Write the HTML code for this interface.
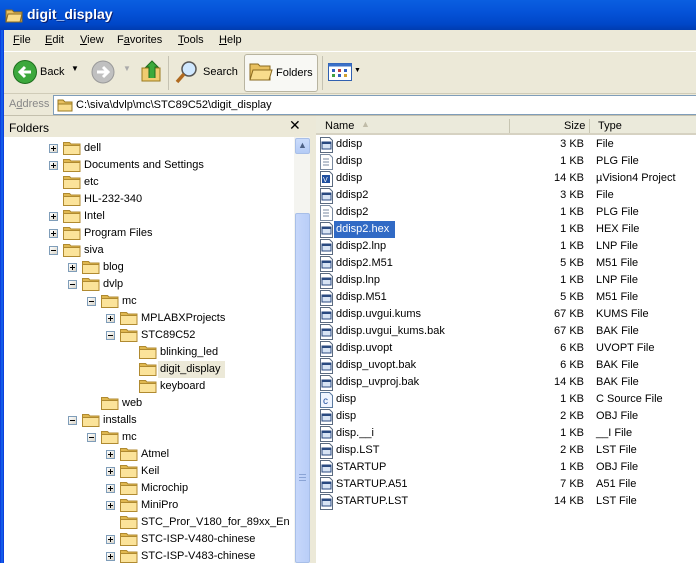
<!DOCTYPE html>
<html><head><style>
*{margin:0;padding:0;box-sizing:border-box}
body{width:696px;height:563px;overflow:hidden;font-family:Tahoma,"Liberation Sans",sans-serif;font-size:11px;background:#ece9d8;position:relative;color:#000}
.a{position:absolute;white-space:nowrap}
#title{left:0;top:0;width:696px;height:30px;background:linear-gradient(#0a5fe0,#0553d8 40%,#0047c8 80%,#003cb0);}
#title span{position:absolute;left:27px;top:6px;color:#fff;font-weight:bold;font-size:14px;text-shadow:1px 1px #0a1e6e}
#menu{left:4px;top:30px;width:692px;height:22px;background:#ece9d8;border-bottom:1px solid #fff}
#menu span{position:absolute;top:4px;font-size:11px}
#tb{left:4px;top:53px;width:692px;height:41px;background:#ece9d8;border-bottom:1px solid #d0ccb8}
#addr{left:4px;top:94px;width:692px;height:22px;background:#ece9d8;border-bottom:1px solid #c4c0ad}
.tree{left:4px;top:137px;width:290px;height:426px;background:#fff}
.ex{position:absolute;width:9px;height:9px;border:1px solid #7f9db9;background:linear-gradient(135deg,#fff,#d8d4c8);}
.ex:before{content:"";position:absolute;left:1px;top:3px;width:5px;height:1px;background:#000}
.ex.p:after{content:"";position:absolute;left:3px;top:1px;width:1px;height:5px;background:#000}
</style></head><body>
<div class="a" id="title"><svg class="a" style="left:5px;top:7px" width="18" height="16"><path d="M1 3h6l2 2h8v10H1z" fill="#e8c060" stroke="#8a6a20"/><path d="M3 7h14l-2 8H1z" fill="#f8dc8c" stroke="#8a6a20"/></svg><span>digit_display</span></div>
<div class="a" style="left:0;top:30px;width:4px;height:533px;background:linear-gradient(90deg,#0831d9,#166aee,#0831d9)"></div>
<div class="a" id="menu">
<span style="left:9px"><u>F</u>ile</span><span style="left:41px"><u>E</u>dit</span><span style="left:76px"><u>V</u>iew</span><span style="left:113px">F<u>a</u>vorites</span><span style="left:174px"><u>T</u>ools</span><span style="left:215px"><u>H</u>elp</span>
</div>
<div class="a" id="tb">
<svg class="a" style="left:8px;top:6px" width="26" height="26"><circle cx="13" cy="13" r="11.5" fill="#3ca83c" stroke="#1e6e1e"/><path d="M19 13H9M13 8l-5 5 5 5" stroke="#fff" stroke-width="3" fill="none"/></svg>
<span class="a" style="left:36px;top:13px">Back</span><span class="a" style="left:67px;top:11px;font-size:8px">▼</span>
<svg class="a" style="left:86px;top:7px" width="26" height="26"><circle cx="13" cy="12" r="11" fill="#c0c0c0" stroke="#999"/><path d="M7 12h10M13 7l5 5-5 5" stroke="#fff" stroke-width="3" fill="none"/></svg>
<span class="a" style="left:119px;top:11px;font-size:8px;color:#aaa">▼</span>
<svg class="a" style="left:136px;top:5px" width="24" height="26"><path d="M2 10h18v13H2z" fill="#f0cc70" stroke="#9a7a20"/><path d="M9 20V9h-3l6-6 6 6h-3v11" fill="#3caa3c" stroke="#1e6e1e"/></svg>
<div class="a" style="left:164px;top:3px;width:1px;height:34px;background:#c5c2b2"></div>
<svg class="a" style="left:170px;top:6px" width="26" height="26"><circle cx="15" cy="10" r="7" fill="#d0e8ff" stroke="#555" stroke-width="1.5"/><path d="M10 15l-7 8" stroke="#b06a20" stroke-width="3.5"/></svg>
<span class="a" style="left:199px;top:13px">Search</span>
<div class="a" style="left:240px;top:1px;width:74px;height:38px;border:1px solid #b8b4a0;border-radius:3px;background:#f8f8f4"></div>
<svg class="a" style="left:245px;top:8px" width="24" height="22"><path d="M1 3h8l2 2h10v14H1z" fill="#e8c060" stroke="#8a6a20"/><path d="M4 9h19l-3 10H1z" fill="#f8dc8c" stroke="#8a6a20"/></svg>
<span class="a" style="left:272px;top:14px">Folders</span>
<div class="a" style="left:318px;top:3px;width:1px;height:34px;background:#c5c2b2"></div>
<svg class="a" style="left:324px;top:10px" width="24" height="18"><rect x="0.5" y="0.5" width="23" height="17" fill="#fff" stroke="#3060b0"/><rect x="0.5" y="0.5" width="23" height="3" fill="#3a70c8"/><g fill="#3060c0"><rect x="4" y="6" width="3" height="3"/><rect x="10" y="6" width="3" height="3" fill="#c04040"/><rect x="16" y="6" width="3" height="3"/><rect x="4" y="11" width="3" height="3" fill="#40a040"/><rect x="10" y="11" width="3" height="3"/><rect x="16" y="11" width="3" height="3" fill="#d0a030"/></g></svg>
<span class="a" style="left:350px;top:14px;font-size:7px">▼</span>
</div>
<div class="a" id="addr">
<span class="a" style="left:5px;top:4px;color:#888">A<u>d</u>dress</span>
<div class="a" style="left:49px;top:1px;width:643px;height:20px;background:#fff;border:1px solid #7f9db9;border-right:none"></div>
<svg class="a" style="left:53px;top:4px" width="16" height="14"><path d="M1 2h5l2 2h7v9H1z" fill="#e8c060" stroke="#9a7a20"/><path d="M1 6h14v7H1z" fill="#f8dc8c" stroke="#9a7a20"/></svg>
<span class="a" style="left:72px;top:5px">C:\siva\dvlp\mc\STC89C52\digit_display</span>
</div>
<div class="a" style="left:4px;top:117px;width:306px;height:20px;background:#ece9d8"></div>
<span class="a" style="left:9px;top:121px;font-size:12px">Folders</span>
<span class="a" style="left:289px;top:117px;font-size:14px">✕</span>
<div class="a tree"></div>
<div class="a" style="left:294px;top:137px;width:16px;height:426px;background:#f4f4f0"></div>
<div class="a" style="left:295px;top:138px;width:15px;height:16px;background:linear-gradient(#cbdcfb,#b4cbf6);border:1px solid #a8bfe8;border-radius:2px;color:#4d6185;font-size:9px;text-align:center;line-height:13px">▲</div>
<div class="a" style="left:295px;top:213px;width:15px;height:350px;background:linear-gradient(90deg,#c6d7fa,#b9cef8);border:1px solid #a8bfe8;border-radius:2px"></div>
<div class="a" style="left:299px;top:474px;width:7px;height:7px;border-top:1px solid #8aa4d6;border-bottom:1px solid #8aa4d6"></div>
<div class="a" style="left:299px;top:477px;width:7px;height:1px;background:#8aa4d6"></div>
<div class="a" style="left:310px;top:116px;width:6px;height:447px;background:#ece9d8"></div>
<div class="a" style="left:0;top:0;font-size:11px">
<div class="ex p" style="left:49px;top:144px"></div>
<div class="ex p" style="left:49px;top:161px"></div>
<div class="ex p" style="left:49px;top:212px"></div>
<div class="ex p" style="left:49px;top:229px"></div>
<div class="ex" style="left:49px;top:246px"></div>
<div class="ex p" style="left:68px;top:263px"></div>
<div class="ex" style="left:68px;top:280px"></div>
<div class="ex" style="left:87px;top:297px"></div>
<div class="ex p" style="left:106px;top:314px"></div>
<div class="ex" style="left:106px;top:331px"></div>
<div class="ex" style="left:68px;top:416px"></div>
<div class="ex" style="left:87px;top:433px"></div>
<div class="ex p" style="left:106px;top:450px"></div>
<div class="ex p" style="left:106px;top:467px"></div>
<div class="ex p" style="left:106px;top:484px"></div>
<div class="ex p" style="left:106px;top:501px"></div>
<div class="ex p" style="left:106px;top:535px"></div>
<div class="ex p" style="left:106px;top:552px"></div>
</div>
<svg class="a" style="left:0;top:0" width="310" height="563">
<defs><g id="fd"><path d="M0.5 2.5h6l1.5 1.5h9v10.5H0.5z" fill="#e0b850" stroke="#b08a30"/><path d="M0.5 5.5h16.5v9H0.5z" fill="#fbe39a" stroke="#b08a30"/></g></defs>
<use href="#fd" x="63" y="140"/><use href="#fd" x="63" y="157"/><use href="#fd" x="63" y="174"/><use href="#fd" x="63" y="191"/><use href="#fd" x="63" y="208"/><use href="#fd" x="63" y="225"/><use href="#fd" x="63" y="242"/>
<use href="#fd" x="82" y="259"/><use href="#fd" x="82" y="276"/><use href="#fd" x="101" y="293"/><use href="#fd" x="120" y="310"/><use href="#fd" x="120" y="327"/>
<use href="#fd" x="139" y="344"/><use href="#fd" x="139" y="361"/><use href="#fd" x="139" y="378"/><use href="#fd" x="101" y="395"/><use href="#fd" x="82" y="412"/><use href="#fd" x="101" y="429"/>
<use href="#fd" x="120" y="446"/><use href="#fd" x="120" y="463"/><use href="#fd" x="120" y="480"/><use href="#fd" x="120" y="497"/><use href="#fd" x="120" y="514"/><use href="#fd" x="120" y="531"/><use href="#fd" x="120" y="548"/>
</svg>
<div class="a" style="left:158px;top:361px;width:67px;height:17px;background:#ece9d8"></div>
<div class="a" style="left:0;top:0">
<span class="a" style="left:84px;top:142px">dell</span>
<span class="a" style="left:84px;top:159px">Documents and Settings</span>
<span class="a" style="left:84px;top:176px">etc</span>
<span class="a" style="left:84px;top:193px">HL-232-340</span>
<span class="a" style="left:84px;top:210px">Intel</span>
<span class="a" style="left:84px;top:227px">Program Files</span>
<span class="a" style="left:84px;top:244px">siva</span>
<span class="a" style="left:103px;top:261px">blog</span>
<span class="a" style="left:103px;top:278px">dvlp</span>
<span class="a" style="left:122px;top:295px">mc</span>
<span class="a" style="left:141px;top:312px">MPLABXProjects</span>
<span class="a" style="left:141px;top:329px">STC89C52</span>
<span class="a" style="left:160px;top:346px">blinking_led</span>
<span class="a" style="left:160px;top:363px">digit_display</span>
<span class="a" style="left:160px;top:380px">keyboard</span>
<span class="a" style="left:122px;top:397px">web</span>
<span class="a" style="left:103px;top:414px">installs</span>
<span class="a" style="left:122px;top:431px">mc</span>
<span class="a" style="left:141px;top:448px">Atmel</span>
<span class="a" style="left:141px;top:465px">Keil</span>
<span class="a" style="left:141px;top:482px">Microchip</span>
<span class="a" style="left:141px;top:499px">MiniPro</span>
<span class="a" style="left:141px;top:516px">STC_Pror_V180_for_89xx_En</span>
<span class="a" style="left:141px;top:533px">STC-ISP-V480-chinese</span>
<span class="a" style="left:141px;top:550px">STC-ISP-V483-chinese</span>
</div>
<div class="a" style="left:316px;top:116px;width:380px;height:447px;background:#fff"></div>
<div class="a" style="left:316px;top:116px;width:380px;height:19px;background:#ebeadb;border-bottom:2px solid #d6d2c2"></div>
<div class="a" style="left:509px;top:119px;width:1px;height:14px;background:#c7c5b2"></div>
<div class="a" style="left:589px;top:119px;width:1px;height:14px;background:#c7c5b2"></div>
<span class="a" style="left:325px;top:120px">Name</span><span class="a" style="left:361px;top:119px;color:#c0bca8;font-size:9px">▲</span>
<span class="a" style="left:564px;top:120px">Size</span>
<span class="a" style="left:598px;top:120px">Type</span>
<svg class="a" style="left:0;top:0" width="340" height="563">
<defs>
<g id="sy"><path d="M1.5 0.5h9l3 3v12h-12z" fill="#fff" stroke="#5a6a80"/><rect x="3" y="5" width="9" height="7" fill="#d8e4f4" stroke="#2a4a80"/><rect x="3" y="5" width="9" height="2" fill="#2a4a80"/></g>
<g id="tx"><path d="M1.5 0.5h9l3 3v12h-12z" fill="#fff" stroke="#7a8aa0"/><path d="M4 5h6M4 8h6M4 11h6" stroke="#7a8aa0"/></g>
<g id="uv"><path d="M1.5 0.5h9l3 3v12h-12z" fill="#fff" stroke="#5a6a80"/><rect x="3" y="4" width="8" height="8" fill="#2050a0"/><text x="4" y="11" font-size="7" fill="#fff" font-family="Liberation Sans">V</text></g>
<g id="cc"><path d="M1.5 0.5h9l3 3v12h-12z" fill="#eef4ff" stroke="#5a7aa0"/><text x="4" y="12" font-size="10" fill="#2050a0" font-family="Liberation Sans">c</text></g>
</defs>
<use href="#sy" x="319" y="137"/><use href="#tx" x="319" y="154"/><use href="#uv" x="319" y="171"/><use href="#sy" x="319" y="188"/><use href="#tx" x="319" y="205"/>
<use href="#sy" x="319" y="222"/><use href="#sy" x="319" y="239"/><use href="#sy" x="319" y="256"/><use href="#sy" x="319" y="273"/><use href="#sy" x="319" y="290"/>
<use href="#sy" x="319" y="307"/><use href="#sy" x="319" y="324"/><use href="#sy" x="319" y="341"/><use href="#sy" x="319" y="358"/><use href="#sy" x="319" y="375"/>
<use href="#cc" x="319" y="392"/><use href="#sy" x="319" y="409"/><use href="#sy" x="319" y="426"/><use href="#sy" x="319" y="443"/><use href="#sy" x="319" y="460"/><use href="#sy" x="319" y="477"/><use href="#sy" x="319" y="494"/>
</svg>
<div class="a" style="left:334px;top:221px;width:61px;height:17px;background:#316ac5"></div>
<div class="a" style="left:0;top:0">
<span class="a" style="left:336px;top:138px">ddisp</span><span class="a" style="left:596px;top:138px">File</span>
<span class="a" style="left:336px;top:155px">ddisp</span><span class="a" style="left:596px;top:155px">PLG File</span>
<span class="a" style="left:336px;top:172px">ddisp</span><span class="a" style="left:596px;top:172px">µVision4 Project</span>
<span class="a" style="left:336px;top:189px">ddisp2</span><span class="a" style="left:596px;top:189px">File</span>
<span class="a" style="left:336px;top:206px">ddisp2</span><span class="a" style="left:596px;top:206px">PLG File</span>
<span class="a" style="left:336px;top:223px;color:#fff">ddisp2.hex</span><span class="a" style="left:596px;top:223px">HEX File</span>
<span class="a" style="left:336px;top:240px">ddisp2.lnp</span><span class="a" style="left:596px;top:240px">LNP File</span>
<span class="a" style="left:336px;top:257px">ddisp2.M51</span><span class="a" style="left:596px;top:257px">M51 File</span>
<span class="a" style="left:336px;top:274px">ddisp.lnp</span><span class="a" style="left:596px;top:274px">LNP File</span>
<span class="a" style="left:336px;top:291px">ddisp.M51</span><span class="a" style="left:596px;top:291px">M51 File</span>
<span class="a" style="left:336px;top:308px">ddisp.uvgui.kums</span><span class="a" style="left:596px;top:308px">KUMS File</span>
<span class="a" style="left:336px;top:325px">ddisp.uvgui_kums.bak</span><span class="a" style="left:596px;top:325px">BAK File</span>
<span class="a" style="left:336px;top:342px">ddisp.uvopt</span><span class="a" style="left:596px;top:342px">UVOPT File</span>
<span class="a" style="left:336px;top:359px">ddisp_uvopt.bak</span><span class="a" style="left:596px;top:359px">BAK File</span>
<span class="a" style="left:336px;top:376px">ddisp_uvproj.bak</span><span class="a" style="left:596px;top:376px">BAK File</span>
<span class="a" style="left:336px;top:393px">disp</span><span class="a" style="left:596px;top:393px">C Source File</span>
<span class="a" style="left:336px;top:410px">disp</span><span class="a" style="left:596px;top:410px">OBJ File</span>
<span class="a" style="left:336px;top:427px">disp.__i</span><span class="a" style="left:596px;top:427px">__I File</span>
<span class="a" style="left:336px;top:444px">disp.LST</span><span class="a" style="left:596px;top:444px">LST File</span>
<span class="a" style="left:336px;top:461px">STARTUP</span><span class="a" style="left:596px;top:461px">OBJ File</span>
<span class="a" style="left:336px;top:478px">STARTUP.A51</span><span class="a" style="left:596px;top:478px">A51 File</span>
<span class="a" style="left:336px;top:495px">STARTUP.LST</span><span class="a" style="left:596px;top:495px">LST File</span>
</div>
<div class="a" style="left:500px;top:0;width:84px;text-align:right">
<div class="a" style="right:0;top:138px">3 KB</div><div class="a" style="right:0;top:155px">1 KB</div><div class="a" style="right:0;top:172px">14 KB</div><div class="a" style="right:0;top:189px">3 KB</div><div class="a" style="right:0;top:206px">1 KB</div><div class="a" style="right:0;top:223px">1 KB</div><div class="a" style="right:0;top:240px">1 KB</div><div class="a" style="right:0;top:257px">5 KB</div><div class="a" style="right:0;top:274px">1 KB</div><div class="a" style="right:0;top:291px">5 KB</div><div class="a" style="right:0;top:308px">67 KB</div><div class="a" style="right:0;top:325px">67 KB</div><div class="a" style="right:0;top:342px">6 KB</div><div class="a" style="right:0;top:359px">6 KB</div><div class="a" style="right:0;top:376px">14 KB</div><div class="a" style="right:0;top:393px">1 KB</div><div class="a" style="right:0;top:410px">2 KB</div><div class="a" style="right:0;top:427px">1 KB</div><div class="a" style="right:0;top:444px">2 KB</div><div class="a" style="right:0;top:461px">1 KB</div><div class="a" style="right:0;top:478px">7 KB</div><div class="a" style="right:0;top:495px">14 KB</div>
</div>
</body></html>
